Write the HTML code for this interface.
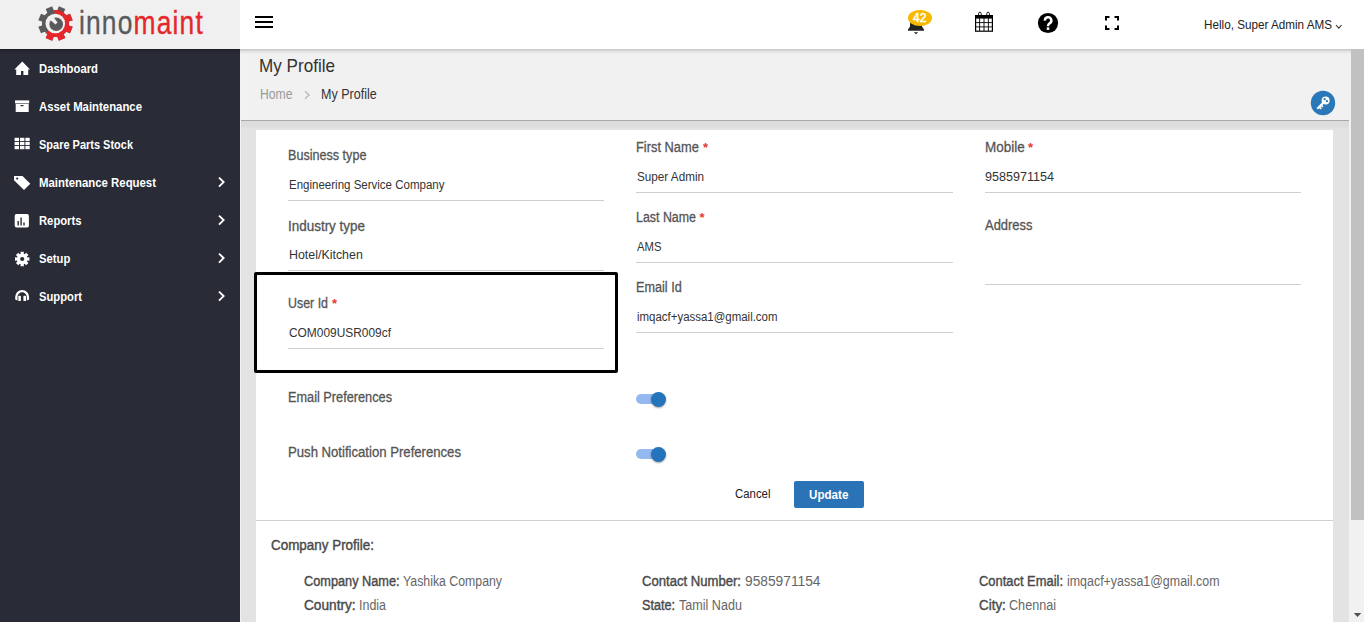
<!DOCTYPE html>
<html><head><meta charset="utf-8">
<style>
*{box-sizing:border-box;margin:0;padding:0}
html,body{width:1364px;height:622px;overflow:hidden;background:#e5e5e5;font-family:"Liberation Sans",sans-serif}
.a{position:absolute}
.tx{position:absolute;white-space:pre;font-family:"Liberation Sans",sans-serif}
#logo{left:0;top:0;width:240px;height:49px;background:#f0f0f0}
#hdr{left:240px;top:0;width:1124px;height:49px;background:#fff}
#hshadow{left:240px;top:49px;width:1111px;height:5px;background:linear-gradient(#c4c4c4,#dedede 40%,rgba(240,240,240,0))}
#side{left:0;top:49px;width:240px;height:573px;background:#292b37}
#sidesh{left:0;top:49px;width:240px;height:6px;background:linear-gradient(rgba(0,0,0,.45),rgba(0,0,0,.1) 30%,rgba(0,0,0,0))}
#main{left:240px;top:49px;width:1109px;height:573px;background:#e3e3e3}
#title{left:240px;top:49px;width:1109px;height:71px;background:#f1f1f1}
#tline{left:240px;top:120px;width:1109px;height:1px;background:#aaaaaa}
#tsh{left:240px;top:121px;width:1109px;height:8px;background:linear-gradient(#dbdbdb,#dddddd 60%,#e3e3e3)}
#vline{left:240px;top:49px;width:1px;height:573px;background:#f2f2f2}
#card{left:256px;top:130px;width:1077px;height:492px;background:#fff}
#sep{left:256px;top:520px;width:1077px;height:1px;background:#d0d0d0}
.ul{position:absolute;height:1px;background:#cfcfcf}
#track{left:1349px;top:49px;width:15px;height:573px;background:#f1f1f1}
#thumb{left:1351px;top:49px;width:13px;height:471px;background:#c1c1c1}
#box{left:254px;top:272px;width:364px;height:101px;border:3px solid #000;border-radius:2px}
.tog-t{position:absolute;width:22px;height:10px;border-radius:5px;background:#94b8f0}
.tog-k{position:absolute;width:15px;height:15px;border-radius:50%;background:#2474bb;box-shadow:0 1px 2px rgba(0,0,0,.35)}
#upd{left:794px;top:481px;width:70px;height:27px;background:#2a73b6;border-radius:2px}
.ham{position:absolute;left:255px;width:18px;height:2px;background:#000}
.ast{position:absolute;color:#e53935;font-size:13px;line-height:13px;font-weight:700;font-family:"Liberation Sans",sans-serif}
</style></head><body>
<div class="a" id="main"></div>
<div class="a" id="title"></div>
<div class="a" id="tline"></div>
<div class="a" id="tsh"></div>
<div class="a" id="card"></div>
<div class="a" id="vline"></div>
<div class="a" id="sep"></div>
<div class="a" id="track"></div>
<div class="a" id="thumb"></div>
<div class="a" id="side"></div>
<div class="a" id="sidesh"></div>
<div class="a" id="logo"></div>
<div class="a" id="hdr"></div>
<div class="a" id="hshadow"></div>
<!-- hamburger -->
<div class="ham" style="top:16px"></div>
<div class="ham" style="top:21px"></div>
<div class="ham" style="top:26px"></div>
<!-- underlines -->
<div class="ul" style="left:288px;top:200px;width:316px"></div>
<div class="ul" style="left:288px;top:270px;width:316px"></div>
<div class="ul" style="left:288px;top:348px;width:316px"></div>
<div class="ul" style="left:636px;top:192px;width:317px"></div>
<div class="ul" style="left:636px;top:262px;width:317px"></div>
<div class="ul" style="left:636px;top:332px;width:317px"></div>
<div class="ul" style="left:985px;top:192px;width:316px"></div>
<div class="ul" style="left:985px;top:284px;width:316px"></div>
<!-- black box -->
<div class="a" id="box"></div>
<!-- asterisks -->
<div class="ast" style="left:703px;top:141px">*</div>
<div class="ast" style="left:699.5px;top:211px">*</div>
<div class="ast" style="left:1028px;top:141px">*</div>
<div class="ast" style="left:332px;top:297px">*</div>
<!-- toggles -->
<div class="tog-t" style="left:636px;top:394px"></div>
<div class="tog-k" style="left:651px;top:392px"></div>
<div class="tog-t" style="left:636px;top:449px"></div>
<div class="tog-k" style="left:651px;top:447px"></div>
<!-- update btn -->
<div class="a" id="upd"></div>
<!-- logo -->
<svg class="a" style="left:0;top:0" width="240" height="49" viewBox="0 0 240 49">
  <defs>
    <clipPath id="cr"><polygon points="55.50,23.50 76.71,2.29 85.50,23.50 76.71,44.71 55.50,53.50 34.29,44.71"/><polygon points="55.50,23.50 54.31,9.85 57.88,10.01 61.29,11.08 65.19,13.81"/></clipPath>
    
  </defs>
  <path d="M68.97,25.39 L72.68,26.84 L70.01,33.29 L66.36,31.68 L63.68,34.36 L65.29,38.01 L58.84,40.68 L57.39,36.97 L53.61,36.97 L52.16,40.68 L45.71,38.01 L47.32,34.36 L44.64,31.68 L40.99,33.29 L38.32,26.84 L42.03,25.39 L42.03,21.61 L38.32,20.16 L40.99,13.71 L44.64,15.32 L47.32,12.64 L45.71,8.99 L52.16,6.32 L53.61,10.03 L57.39,10.03 L58.84,6.32 L65.29,8.99 L63.68,12.64 L66.36,15.32 L70.01,13.71 L72.68,20.16 L68.97,21.61 Z" fill="#5a5a5c"/>
  <g clip-path="url(#cr)"><path d="M68.97,25.39 L72.68,26.84 L70.01,33.29 L66.36,31.68 L63.68,34.36 L65.29,38.01 L58.84,40.68 L57.39,36.97 L53.61,36.97 L52.16,40.68 L45.71,38.01 L47.32,34.36 L44.64,31.68 L40.99,33.29 L38.32,26.84 L42.03,25.39 L42.03,21.61 L38.32,20.16 L40.99,13.71 L44.64,15.32 L47.32,12.64 L45.71,8.99 L52.16,6.32 L53.61,10.03 L57.39,10.03 L58.84,6.32 L65.29,8.99 L63.68,12.64 L66.36,15.32 L70.01,13.71 L72.68,20.16 L68.97,21.61 Z" fill="#e5272c"/></g>
  <circle cx="55.3" cy="23.5" r="9.8" fill="#f0f0f0"/>
  <circle cx="56.2" cy="24.3" r="6.8" fill="#5a5a5c"/>
  <path d="M48.5,18.5 L55.5,24.5 L57.5,22.5 L52.5,15.5 Z" fill="#f0f0f0"/>
</svg>
<div class="a" style="left:79px;top:3px;white-space:pre;font-family:'Liberation Sans',sans-serif;font-size:33px;line-height:40px;transform:scaleX(0.8);transform-origin:0 0;letter-spacing:1.45px"><span style="color:#5a5a5c;-webkit-text-stroke:0.35px #5a5a5c">inno</span><span style="color:#e5272c;-webkit-text-stroke:0.35px #e5272c">maint</span></div>
<!-- sidebar icons -->
<svg class="a" style="left:0;top:49px" width="240" height="260" viewBox="0 49 240 260">
  <!-- home -->
  <path d="M22.3,61.6 L30,69.6 L28.2,69.6 L28.2,75 L23.4,75 L23.4,71 L21,71 L21,75 L16.2,75 L16.2,69.6 L14.4,69.6 Z" fill="#fff"/>
  <!-- archive -->
  <rect x="15" y="100.4" width="14.2" height="2.9" fill="#fff"/>
  <rect x="15.7" y="103.8" width="13" height="8.2" fill="#fff"/>
  <rect x="20.5" y="105" width="3" height="1.2" fill="#292b37"/>
  <!-- grid -->
  <g fill="#fff">
    <rect x="14.6" y="137.8" width="4.4" height="3.2"/><rect x="20" y="137.8" width="4.4" height="3.2"/><rect x="25.4" y="137.8" width="4.3" height="3.2"/>
    <rect x="14.6" y="141.9" width="4.4" height="3.2"/><rect x="20" y="141.9" width="4.4" height="3.2"/><rect x="25.4" y="141.9" width="4.3" height="3.2"/>
    <rect x="14.6" y="146" width="4.4" height="3.2"/><rect x="20" y="146" width="4.4" height="3.2"/><rect x="25.4" y="146" width="4.3" height="3.2"/>
  </g>
  <!-- tag -->
  <path d="M14,176 L22.5,176 L30.3,183.8 L24,190 L14,180.2 Z" fill="#fff"/>
  <circle cx="17.2" cy="178.6" r="1.1" fill="#292b37"/>
  <!-- reports -->
  <rect x="14.7" y="214.1" width="14.2" height="13.5" rx="1.8" fill="#fff"/>
  <rect x="17.5" y="221" width="1.4" height="4.5" fill="#292b37"/>
  <rect x="20.4" y="217.5" width="1.4" height="8" fill="#292b37"/>
  <rect x="23.3" y="222.5" width="1.4" height="3" fill="#292b37"/>
  <!-- cog -->
  <path d="M23.78,264.16 L23.86,266.21 L20.54,266.21 L20.62,264.16 L19.66,263.77 L18.28,265.28 L15.92,262.92 L17.43,261.54 L17.04,260.58 L14.99,260.66 L14.99,257.34 L17.04,257.42 L17.43,256.46 L15.92,255.08 L18.28,252.72 L19.66,254.23 L20.62,253.84 L20.54,251.79 L23.86,251.79 L23.78,253.84 L24.74,254.23 L26.12,252.72 L28.48,255.08 L26.97,256.46 L27.36,257.42 L29.41,257.34 L29.41,260.66 L27.36,260.58 L26.97,261.54 L28.48,262.92 L26.12,265.28 L24.74,263.77 Z M20.10,259 a2.1,2.1 0 1 0 4.2,0 a2.1,2.1 0 1 0 -4.2,0 Z" fill="#fff" fill-rule="evenodd"/>
  <!-- headphones -->
  <path d="M15.2,297 A6.95,6.95 0 0 1 29.1,297 L29.1,299.5 L26.8,300.5 L26.8,297 A4.65,4.65 0 0 0 17.5,297 L17.5,300.5 L15.2,299.5 Z" fill="#fff"/>
  <rect x="18.3" y="295.8" width="2.6" height="5.2" rx="0.6" fill="#fff"/>
  <rect x="23.4" y="295.8" width="2.6" height="5.2" rx="0.6" fill="#fff"/>
  <!-- chevrons -->
  <g stroke="#fff" stroke-width="1.9" fill="none">
    <path d="M219,177.6 L223.6,182.1 L219,186.6"/>
    <path d="M219,215.6 L223.6,220.1 L219,224.6"/>
    <path d="M219,253.6 L223.6,258.1 L219,262.6"/>
    <path d="M219,291.6 L223.6,296.1 L219,300.6"/>
  </g>
</svg>
<!-- header icons -->
<svg class="a" style="left:890px;top:0" width="474" height="49" viewBox="890 0 474 49">
  <!-- bell -->
  <path d="M916,14 C920.5,14 922,17.5 922,22 L922,26.5 L924,29.5 L924,30.8 L908,30.8 L908,29.5 L910,26.5 L910,22 C910,17.5 911.5,14 916,14 Z" fill="#222"/>
  <path d="M913.8,32.2 L918.2,32.2 L916,34.2 Z" fill="#222"/>
  <ellipse cx="920" cy="18" rx="12" ry="8.1" fill="#f7b900"/>
  <text x="919.8" y="22.4" font-family="Liberation Sans" font-size="12" font-weight="400" stroke="#fff" stroke-width="0.5" fill="#fff" text-anchor="middle">42</text>
  <!-- calendar -->
  <rect x="975.6" y="15.6" width="16.8" height="15.6" fill="none" stroke="#000" stroke-width="1.2"/>
  <rect x="975" y="15" width="18" height="3.6" fill="#000"/>
  <g stroke="#000" stroke-width="0.9">
    <line x1="979.6" y1="18" x2="979.6" y2="31"/><line x1="984" y1="18" x2="984" y2="31"/><line x1="988.4" y1="18" x2="988.4" y2="31"/>
    <line x1="976" y1="22.6" x2="992" y2="22.6"/><line x1="976" y1="26.9" x2="992" y2="26.9"/>
  </g>
  <rect x="978.6" y="12.2" width="2.6" height="4.6" rx="1.3" fill="none" stroke="#000" stroke-width="0.9"/>
  <rect x="986.8" y="12.2" width="2.6" height="4.6" rx="1.3" fill="none" stroke="#000" stroke-width="0.9"/>
  <!-- question -->
  <circle cx="1048" cy="23" r="10.1" fill="#000"/>
  <path d="M1044.9,20.6 A3.2,3.2 0 1 1 1049.6,23.3 C1048.5,24 1048,24.6 1048,26.2" stroke="#fff" stroke-width="2.5" fill="none"/><rect x="1046.7" y="27.4" width="2.6" height="2.5" fill="#fff"/>
  <!-- fullscreen -->
  <g stroke="#000" stroke-width="2" fill="none" stroke-linecap="butt">
    <path d="M1106,20.5 L1106,17 L1109.5,17"/>
    <path d="M1114.5,17 L1118,17 L1118,20.5"/>
    <path d="M1118,25.5 L1118,29 L1114.5,29"/>
    <path d="M1109.5,29 L1106,29 L1106,25.5"/>
  </g>
  <!-- caret -->
  <path d="M1336,25 L1338.8,28.2 L1341.6,25" stroke="#333" stroke-width="1.1" fill="none"/>
</svg>
<!-- breadcrumb chevron -->
<svg class="a" style="left:300px;top:85px" width="16" height="18" viewBox="300 85 16 18">
  <path d="M305,91.3 L309,95 L305,98.7" stroke="#bdbdbd" stroke-width="1.5" fill="none"/>
</svg>
<!-- key button -->
<svg class="a" style="left:1308px;top:88px" width="30" height="30" viewBox="1308 88 30 30">
  <circle cx="1323" cy="103" r="12.2" fill="#2a78b8"/>
  <circle cx="1325.6" cy="100.4" r="4" fill="#fff"/>
  <path d="M1323.5,102.5 L1317.3,108.7" stroke="#fff" stroke-width="2"/>
  <path d="M1319.2,106.8 L1321.3,108.9 M1321,105 L1322.9,106.9" stroke="#fff" stroke-width="1.7"/>
  <circle cx="1324.6" cy="99.2" r="1.1" fill="#2a78b8"/>
  <circle cx="1326.9" cy="101.2" r="1.1" fill="#2a78b8"/>
</svg>
<!-- scrollbar arrow -->
<svg class="a" style="left:1350px;top:608px" width="14" height="14" viewBox="1350 608 14 14">
  <path d="M1353.8,613 L1361.3,613 L1357.5,617 Z" fill="#505050"/>
</svg>

<div class='tx' style='left:39.0px;top:62.7px;font-size:12.5px;line-height:12.5px;font-weight:700;color:#fff;transform:scaleX(0.9036);transform-origin:0 0;'>Dashboard</div>
<div class='tx' style='left:39px;top:101.0px;font-size:12.5px;line-height:12.5px;font-weight:700;color:#fff;transform:scaleX(0.9096);transform-origin:0 0;'>Asset Maintenance</div>
<div class='tx' style='left:39.0px;top:139.0px;font-size:12.5px;line-height:12.5px;font-weight:700;color:#fff;transform:scaleX(0.8785);transform-origin:0 0;'>Spare Parts Stock</div>
<div class='tx' style='left:39.0px;top:177.0px;font-size:12.5px;line-height:12.5px;font-weight:700;color:#fff;transform:scaleX(0.9104);transform-origin:0 0;'>Maintenance Request</div>
<div class='tx' style='left:39.0px;top:215.0px;font-size:12.5px;line-height:12.5px;font-weight:700;color:#fff;transform:scaleX(0.8998);transform-origin:0 0;'>Reports</div>
<div class='tx' style='left:39.0px;top:253.0px;font-size:12.5px;line-height:12.5px;font-weight:700;color:#fff;transform:scaleX(0.9011);transform-origin:0 0;'>Setup</div>
<div class='tx' style='left:39.0px;top:291.0px;font-size:12.5px;line-height:12.5px;font-weight:700;color:#fff;transform:scaleX(0.8973);transform-origin:0 0;'>Support</div>
<div class='tx' style='left:1204px;top:19.0px;font-size:12px;line-height:12px;font-weight:400;color:#222;transform:scaleX(0.9741);transform-origin:0 0;'>Hello, Super Admin AMS</div>
<div class='tx' style='left:259px;top:56.0px;font-size:19px;line-height:19px;font-weight:400;color:#333;transform:scaleX(0.8997);transform-origin:0 0;'>My Profile</div>
<div class='tx' style='left:259.5px;top:87.0px;font-size:14px;line-height:14px;font-weight:400;color:#999;transform:scaleX(0.8699);transform-origin:0 0;'>Home</div>
<div class='tx' style='left:321px;top:87.0px;font-size:14px;line-height:14px;font-weight:400;color:#333;transform:scaleX(0.8950);transform-origin:0 0;'>My Profile</div>
<div class='tx' style='left:288.0px;top:148.0px;font-size:14px;line-height:14px;font-weight:400;color:#555;transform:scaleX(0.8994);transform-origin:0 0;-webkit-text-stroke:0.3px #555;'>Business type</div>
<div class='tx' style='left:288.0px;top:218.5px;font-size:14px;line-height:14px;font-weight:400;color:#555;transform:scaleX(0.9606);transform-origin:0 0;-webkit-text-stroke:0.3px #555;'>Industry type</div>
<div class='tx' style='left:288.0px;top:295.5px;font-size:14px;line-height:14px;font-weight:400;color:#555;transform:scaleX(0.8864);transform-origin:0 0;-webkit-text-stroke:0.3px #555;'>User Id</div>
<div class='tx' style='left:636.4px;top:139.5px;font-size:14px;line-height:14px;font-weight:400;color:#555;transform:scaleX(0.9174);transform-origin:0 0;-webkit-text-stroke:0.3px #555;'>First Name</div>
<div class='tx' style='left:636.4px;top:209.8px;font-size:14px;line-height:14px;font-weight:400;color:#555;transform:scaleX(0.8862);transform-origin:0 0;-webkit-text-stroke:0.3px #555;'>Last Name</div>
<div class='tx' style='left:636.4px;top:279.8px;font-size:14px;line-height:14px;font-weight:400;color:#555;transform:scaleX(0.9036);transform-origin:0 0;-webkit-text-stroke:0.3px #555;'>Email Id</div>
<div class='tx' style='left:984.7px;top:139.7px;font-size:14px;line-height:14px;font-weight:400;color:#555;transform:scaleX(0.9624);transform-origin:0 0;-webkit-text-stroke:0.3px #555;'>Mobile</div>
<div class='tx' style='left:984.7px;top:217.7px;font-size:14px;line-height:14px;font-weight:400;color:#555;transform:scaleX(0.9249);transform-origin:0 0;-webkit-text-stroke:0.3px #555;'>Address</div>
<div class='tx' style='left:288.2px;top:390.0px;font-size:14px;line-height:14px;font-weight:400;color:#555;transform:scaleX(0.9092);transform-origin:0 0;-webkit-text-stroke:0.3px #555;'>Email Preferences</div>
<div class='tx' style='left:288.2px;top:444.5px;font-size:14px;line-height:14px;font-weight:400;color:#555;transform:scaleX(0.9380);transform-origin:0 0;-webkit-text-stroke:0.3px #555;'>Push Notification Preferences</div>
<div class='tx' style='left:288.9px;top:179.0px;font-size:12px;line-height:12px;font-weight:400;color:#333;transform:scaleX(0.9593);transform-origin:0 0;'>Engineering Service Company</div>
<div class='tx' style='left:289.2px;top:249.0px;font-size:12px;line-height:12px;font-weight:400;color:#333;transform:scaleX(1.0340);transform-origin:0 0;'>Hotel/Kitchen</div>
<div class='tx' style='left:289.2px;top:326.5px;font-size:12px;line-height:12px;font-weight:400;color:#333;transform:scaleX(0.9930);transform-origin:0 0;'>COM009USR009cf</div>
<div class='tx' style='left:637.0px;top:171.2px;font-size:12px;line-height:12px;font-weight:400;color:#333;transform:scaleX(0.9750);transform-origin:0 0;'>Super Admin</div>
<div class='tx' style='left:637.0px;top:240.8px;font-size:12px;line-height:12px;font-weight:400;color:#333;transform:scaleX(0.9417);transform-origin:0 0;'>AMS</div>
<div class='tx' style='left:637.0px;top:310.8px;font-size:12px;line-height:12px;font-weight:400;color:#333;transform:scaleX(0.9543);transform-origin:0 0;'>imqacf+yassa1@gmail.com</div>
<div class='tx' style='left:985.2px;top:171.0px;font-size:12px;line-height:12px;font-weight:400;color:#333;transform:scaleX(1.0477);transform-origin:0 0;'>9585971154</div>
<div class='tx' style='left:734.7px;top:488.0px;font-size:12px;line-height:12px;font-weight:400;color:#222;transform:scaleX(0.9502);transform-origin:0 0;'>Cancel</div>
<div class='tx' style='left:809px;top:488.7px;font-size:12px;line-height:12px;font-weight:700;color:#fff;transform:scaleX(0.9687);transform-origin:0 0;'>Update</div>
<div class='tx' style='left:271.2px;top:538.1px;font-size:14px;line-height:14px;font-weight:400;color:#4a4a4a;transform:scaleX(0.9591);transform-origin:0 0;-webkit-text-stroke:0.4px #4a4a4a;'>Company Profile:</div>
<div class='tx' style='left:303.8px;top:574.0px;font-size:14px;line-height:14px;font-weight:400;color:#4a4a4a;transform:scaleX(0.9101);transform-origin:0 0;-webkit-text-stroke:0.4px #4a4a4a;'>Company Name:</div>
<div class='tx' style='left:403px;top:574.0px;font-size:14px;line-height:14px;font-weight:400;color:#666;transform:scaleX(0.8794);transform-origin:0 0;'>Yashika Company</div>
<div class='tx' style='left:303.8px;top:598.2px;font-size:14px;line-height:14px;font-weight:400;color:#4a4a4a;transform:scaleX(0.9750);transform-origin:0 0;-webkit-text-stroke:0.4px #4a4a4a;'>Country:</div>
<div class='tx' style='left:359px;top:598.2px;font-size:14px;line-height:14px;font-weight:400;color:#666;transform:scaleX(0.8893);transform-origin:0 0;'>India</div>
<div class='tx' style='left:641.9px;top:574.0px;font-size:14px;line-height:14px;font-weight:400;color:#4a4a4a;transform:scaleX(0.9355);transform-origin:0 0;-webkit-text-stroke:0.4px #4a4a4a;'>Contact Number:</div>
<div class='tx' style='left:744.5px;top:574.0px;font-size:14px;line-height:14px;font-weight:400;color:#666;transform:scaleX(0.9827);transform-origin:0 0;'>9585971154</div>
<div class='tx' style='left:641.9px;top:598.0px;font-size:14px;line-height:14px;font-weight:400;color:#4a4a4a;transform:scaleX(0.9018);transform-origin:0 0;-webkit-text-stroke:0.4px #4a4a4a;'>State:</div>
<div class='tx' style='left:678.5px;top:598.0px;font-size:14px;line-height:14px;font-weight:400;color:#666;transform:scaleX(0.8982);transform-origin:0 0;'>Tamil Nadu</div>
<div class='tx' style='left:979.4px;top:574.0px;font-size:14px;line-height:14px;font-weight:400;color:#4a4a4a;transform:scaleX(0.9226);transform-origin:0 0;-webkit-text-stroke:0.4px #4a4a4a;'>Contact Email:</div>
<div class='tx' style='left:1066.5px;top:574.0px;font-size:14px;line-height:14px;font-weight:400;color:#666;transform:scaleX(0.8878);transform-origin:0 0;'>imqacf+yassa1@gmail.com</div>
<div class='tx' style='left:979.4px;top:598.0px;font-size:14px;line-height:14px;font-weight:400;color:#4a4a4a;transform:scaleX(0.9571);transform-origin:0 0;-webkit-text-stroke:0.4px #4a4a4a;'>City:</div>
<div class='tx' style='left:1009px;top:598.0px;font-size:14px;line-height:14px;font-weight:400;color:#666;transform:scaleX(0.9011);transform-origin:0 0;'>Chennai</div>
</body></html>
